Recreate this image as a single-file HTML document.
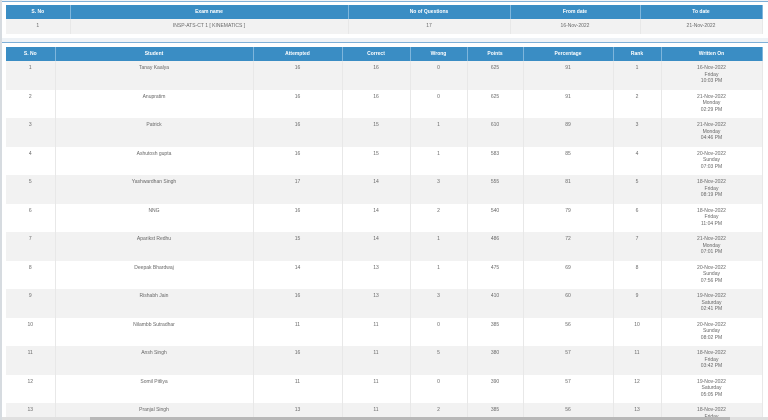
<!DOCTYPE html>
<html style="height:420px;overflow:hidden"><head><style>
*{margin:0;padding:0;box-sizing:border-box}
html,body{width:768px;height:420px;overflow:hidden}
body{background:#eef2f6;font-family:"Liberation Sans",sans-serif;font-size:5px;color:#666;position:relative}
.panel{position:absolute;left:2px;width:766px;background:#fff;border-top:1px solid #7fb0d8;overflow:hidden}
table{position:absolute;left:4px;border-collapse:collapse;table-layout:fixed;width:756px}
th{background:#3a8dc4;color:#fff;font-weight:bold;height:14px;border-right:1px solid #7fb6dc;text-align:center}
td{text-align:center;border-right:1px solid #e8e8e8;vertical-align:top;padding-top:4px;line-height:6.5px}
tr.g td{background:#f2f2f2}
</style></head><body>
<div style="position:absolute;left:0;top:0;width:2px;height:420px;background:#d6dbe0"></div>
<div class="panel" style="top:1px;height:37px">
<table style="top:3px">
<col style="width:64px"><col style="width:278px"><col style="width:162px"><col style="width:130px"><col style="width:122px">
<tr><th>S. No</th><th>Exam name</th><th>No of Questions</th><th>From date</th><th>To date</th></tr>
<tr class="g"><td style="height:15px">1</td><td>INSP-ATS-CT 1 [ KINEMATICS ]</td><td>17</td><td>16-Nov-2022</td><td>21-Nov-2022</td></tr>
</table></div>
<div class="panel" style="top:42px;height:375px">
<table style="top:4px">
<col style="width:49px"><col style="width:198px"><col style="width:89px"><col style="width:68px"><col style="width:57px"><col style="width:56px"><col style="width:90px"><col style="width:48px"><col style="width:101px">
<tr><th>S. No</th><th>Student</th><th>Attempted</th><th>Correct</th><th>Wrong</th><th>Points</th><th>Percentage</th><th>Rank</th><th>Written On</th></tr>
<tr class="g" style="height:28.5px"><td>1</td><td>Tanay Kaalya</td><td>16</td><td>16</td><td>0</td><td>625</td><td>91</td><td>1</td><td>16-Nov-2022<br>Friday<br>10:03 PM</td></tr>
<tr style="height:28.5px"><td>2</td><td>Anupratim</td><td>16</td><td>16</td><td>0</td><td>625</td><td>91</td><td>2</td><td>21-Nov-2022<br>Monday<br>02:29 PM</td></tr>
<tr class="g" style="height:28.5px"><td>3</td><td>Patrick</td><td>16</td><td>15</td><td>1</td><td>610</td><td>89</td><td>3</td><td>21-Nov-2022<br>Monday<br>04:46 PM</td></tr>
<tr style="height:28.5px"><td>4</td><td>Ashutosh gupta</td><td>16</td><td>15</td><td>1</td><td>583</td><td>85</td><td>4</td><td>20-Nov-2022<br>Sunday<br>07:03 PM</td></tr>
<tr class="g" style="height:28.5px"><td>5</td><td>Yashwardhan Singh</td><td>17</td><td>14</td><td>3</td><td>555</td><td>81</td><td>5</td><td>18-Nov-2022<br>Friday<br>08:19 PM</td></tr>
<tr style="height:28.5px"><td>6</td><td>NNG</td><td>16</td><td>14</td><td>2</td><td>540</td><td>79</td><td>6</td><td>18-Nov-2022<br>Friday<br>11:04 PM</td></tr>
<tr class="g" style="height:28.5px"><td>7</td><td>Aparikst Redhu</td><td>15</td><td>14</td><td>1</td><td>486</td><td>72</td><td>7</td><td>21-Nov-2022<br>Monday<br>07:01 PM</td></tr>
<tr style="height:28.5px"><td>8</td><td>Deepak Bhardwaj</td><td>14</td><td>13</td><td>1</td><td>475</td><td>69</td><td>8</td><td>20-Nov-2022<br>Sunday<br>07:56 PM</td></tr>
<tr class="g" style="height:28.5px"><td>9</td><td>Rishabh Jain</td><td>16</td><td>13</td><td>3</td><td>410</td><td>60</td><td>9</td><td>19-Nov-2022<br>Saturday<br>02:41 PM</td></tr>
<tr style="height:28.5px"><td>10</td><td>Nilambb Sutradhar</td><td>11</td><td>11</td><td>0</td><td>385</td><td>56</td><td>10</td><td>20-Nov-2022<br>Sunday<br>08:02 PM</td></tr>
<tr class="g" style="height:28.5px"><td>11</td><td>Ansh Singh</td><td>16</td><td>11</td><td>5</td><td>380</td><td>57</td><td>11</td><td>18-Nov-2022<br>Friday<br>03:42 PM</td></tr>
<tr style="height:28.5px"><td>12</td><td>Somil Pitliya</td><td>11</td><td>11</td><td>0</td><td>390</td><td>57</td><td>12</td><td>19-Nov-2022<br>Saturday<br>05:05 PM</td></tr>
<tr class="g" style="height:28.5px"><td>13</td><td>Pranjal Singh</td><td>13</td><td>11</td><td>2</td><td>385</td><td>56</td><td>13</td><td>18-Nov-2022<br>Friday<br>&nbsp;</td></tr>
</table></div>
<div style="position:absolute;left:2px;top:417px;width:766px;height:3px;background:#e0e0e0"></div>
<div style="position:absolute;left:90px;top:417px;width:640px;height:3px;background:#b8b8b8"></div>
</body></html>
